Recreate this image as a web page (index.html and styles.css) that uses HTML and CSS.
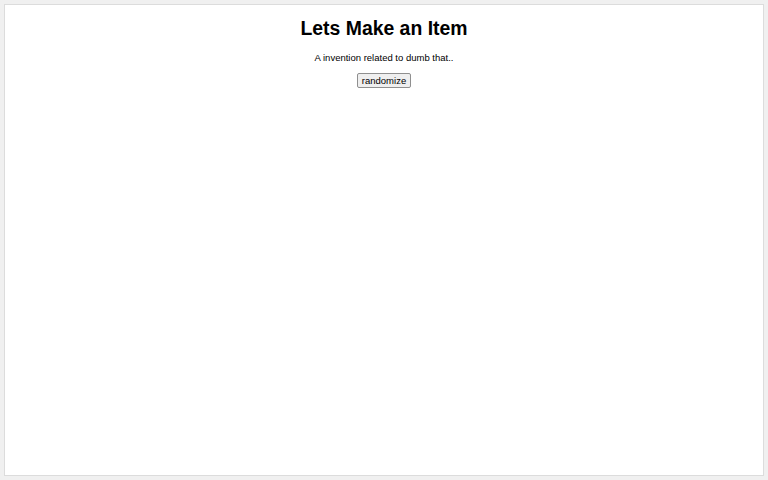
FILE: index.html
```html
<!DOCTYPE html>
<html lang="en">
<head>
    <meta charset="UTF-8">
    <title>Lets Make an Item</title>
    <link rel="stylesheet" href="styles.css">
</head>
<body>
    <div class="frame">
        <h1>Lets Make an Item</h1>
        <p class="idea">A invention related to dumb that..</p>
        <button class="randomize">randomize</button>
    </div>
</body>
</html>
```

FILE: styles.css
```css
* {
    margin: 0;
    padding: 0;
    box-sizing: border-box;
}

body {
    font-family: "Liberation Sans", Arial, sans-serif;
    background-color: #f0f0f0;
    padding: 4px;
    height: 100vh;
}

.frame {
    background-color: white;
    border: 1px solid #dcdcdc;
    height: 100%;
    display: flex;
    flex-direction: column;
    align-items: center;
}

h1 {
    font-size: 19.4px;
    margin-top: 12px;
    color: #000;
}

.idea {
    font-size: 9.5px;
    margin-top: 12px;
}

.randomize {
    font-family: "Liberation Sans", Arial, sans-serif;
    font-size: 9.5px;
    line-height: 11px;
    margin-top: 10px;
    padding: 1px 4px;
    background-color: #efefef;
    border: 1px solid #8f8f8f;
    border-radius: 2px;
}
```
